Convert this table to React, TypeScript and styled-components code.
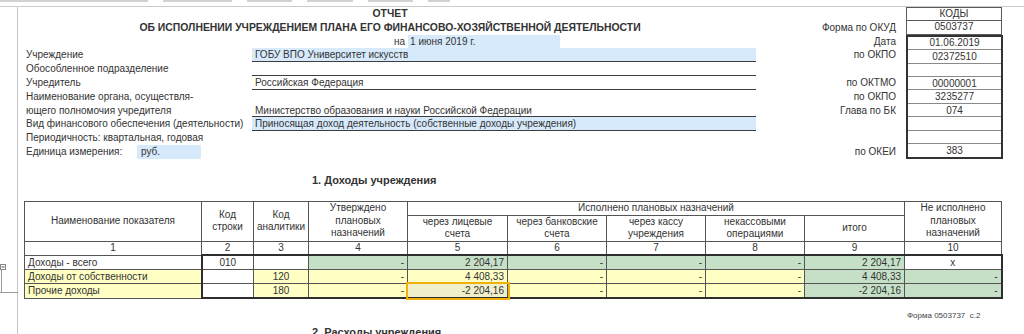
import React from "react";
import styled, { createGlobalStyle } from "styled-components";

const GlobalStyle = createGlobalStyle`
  html, body {
    margin: 0;
    padding: 0;
    background: #fff;
  }
  body {
    font-family: "Liberation Sans", Arial, sans-serif;
    color: #333;
  }
`;

const ROW = 13.8;
const BLUE = "#d7eafb";
const GREEN = "#c6e0c7";
const YELLOW = "#ffffc4";

const Screen = styled.div`
  width: 1024px;
  height: 334px;
  overflow: hidden;
  display: flex;
  flex-direction: column;
  background: #fff;
`;

const TopStrip = styled.div`
  height: 6px;
  flex: none;
  display: flex;
  align-items: flex-start;
  border-bottom: 1px solid #cbcbcb;
`;

const StripTab = styled.div<{ $w: number; $gap: number }>`
  width: ${(p) => p.$w}px;
  margin-left: ${(p) => p.$gap}px;
  height: 2px;
  background: #d2d2d2;
`;

const Body = styled.div`
  flex: 1;
  display: flex;
  min-height: 0;
`;

const Gutter = styled.div`
  width: 18px;
  flex: none;
  border-right: 1px solid #c6c6c6;
  padding-top: 249px;
  box-sizing: border-box;
`;

const Sheet = styled.div`
  flex: 1;
  display: flex;
  flex-direction: column;
  font-size: 10px;
`;

const HeaderGrid = styled.div`
  display: grid;
  grid-template-columns: 234px 504px 150px 96px;
  grid-auto-rows: ${ROW}px;
`;

const TitleLine = styled.div<{ $row: number }>`
  grid-column: 1 / span 2;
  grid-row: ${(p) => p.$row};
  padding-left: 6px;
  text-align: center;
  font-weight: bold;
  font-size: 10.4px;
  line-height: ${ROW}px;
  white-space: nowrap;
`;

const DateLine = styled.div`
  grid-column: 1 / span 2;
  grid-row: 3;
  display: flex;
  align-items: stretch;
  padding-left: 376px;
  line-height: ${ROW}px;
`;

const DateBox = styled.span`
  width: 150px;
  margin-left: 3px;
  padding-left: 2px;
  background: ${BLUE};
`;

const Label = styled.div<{ $row: number }>`
  grid-column: 1;
  grid-row: ${(p) => p.$row};
  padding-left: 8px;
  line-height: ${ROW}px;
  white-space: nowrap;
  display: flex;
`;

const UnitCaption = styled.span`
  width: 111px;
`;

const UnitBox = styled.span`
  width: 60px;
  padding-left: 4px;
  background: ${BLUE};
`;

const Field = styled.div<{ $row: number; $fill?: boolean; $line?: boolean }>`
  grid-column: 2;
  grid-row: ${(p) => p.$row};
  padding-left: 3px;
  line-height: ${ROW}px;
  box-sizing: border-box;
  white-space: nowrap;
  background: ${(p) => (p.$fill ? BLUE : "transparent")};
  border-bottom: ${(p) => (p.$line ? "1px solid #3d3d3d" : "none")};
`;

const CodeLabel = styled.div<{ $row: number }>`
  grid-column: 3;
  grid-row: ${(p) => p.$row};
  padding-right: 10px;
  text-align: right;
  line-height: ${ROW}px;
  white-space: nowrap;
`;

const CodesBox = styled.div`
  grid-column: 4;
  grid-row: 1 / span 11;
  display: flex;
  flex-direction: column;
`;

const PlainCode = styled.div<{ $first?: boolean }>`
  height: ${ROW}px;
  box-sizing: border-box;
  border: 1px solid #5a5a5a;
  border-top-width: ${(p) => (p.$first ? 1 : 0)}px;
  text-align: center;
  line-height: ${ROW - 1}px;
`;

const ThickGroup = styled.div`
  flex: 1;
  display: flex;
  flex-direction: column;
  border: 2px solid #333;
  margin-right: -1px;
`;

const GroupCell = styled.div`
  flex: 1;
  display: flex;
  align-items: center;
  justify-content: center;
  border-top: 1px solid #8a8a8a;
  &:first-child {
    border-top: none;
  }
`;

const SectionTitle = styled.div<{ $top: number }>`
  margin-top: ${(p) => p.$top}px;
  height: 14px;
  line-height: 14px;
  padding-left: 294px;
  font-weight: bold;
  font-size: 11px;
  white-space: nowrap;
`;

const Table = styled.table`
  margin-top: 14px;
  margin-left: 6px;
  width: 977px;
  table-layout: fixed;
  border-collapse: collapse;
  font-size: 10px;
  border: 1px solid #444;
`;

const Th = styled.th<{ $h?: number }>`
  border: 1px solid #555;
  font-weight: normal;
  text-align: center;
  vertical-align: middle;
  line-height: 12.5px;
  padding: 0 2px;
  height: ${(p) => (p.$h ? `${p.$h}px` : "auto")};
`;

type Tone = "white" | "green" | "yellow" | "selected";

const toneColor: Record<Tone, string> = {
  white: "#fff",
  green: GREEN,
  yellow: YELLOW,
  selected: "#efefcb",
};

const Td = styled.td<{
  $tone: Tone;
  $align?: "left" | "center" | "right";
  $top?: boolean;
  $bottom?: boolean;
  $left?: boolean;
  $right?: boolean;
}>`
  height: 13px;
  padding: 0 3px;
  line-height: 13px;
  white-space: nowrap;
  overflow: visible;
  background: ${(p) => toneColor[p.$tone]};
  text-align: ${(p) => p.$align ?? "right"};
  border: 1px solid #555;
  ${(p) => (p.$top ? "border-top: 2px solid #2e2e2e;" : "")}
  ${(p) => (p.$bottom ? "border-bottom: 2px solid #2e2e2e;" : "")}
  ${(p) => (p.$left ? "border-left: 2px solid #2e2e2e;" : "")}
  ${(p) => (p.$right ? "border-right: 2px solid #2e2e2e;" : "")}
  ${(p) =>
    p.$tone === "selected"
      ? "outline: 2px solid #f2b10a; outline-offset: 0px; position: relative;"
      : ""}
`;

const PageBreak = styled.div`
  margin-top: 12px;
  height: 1px;
  background: repeating-linear-gradient(to right, #555 0 7px, transparent 7px 10px);
`;

const FooterNote = styled.div`
  height: 10px;
  line-height: 10px;
  padding-left: 889px;
  font-size: 8px;
  white-space: pre;
  color: #444;
`;

const widths = [177, 52, 55, 99, 100, 99, 99, 99, 100, 97];

type Row = {
  name: string;
  nameTone: Tone;
  code: string;
  codeTone: Tone;
  an: string;
  anTone: Tone;
  cells: { v: string; tone: Tone; align?: "center" | "right" }[];
};

const rows: Row[] = [
  {
    name: "Доходы - всего",
    nameTone: "white",
    code: "010",
    codeTone: "white",
    an: "",
    anTone: "white",
    cells: [
      { v: "-", tone: "green" },
      { v: "2 204,17", tone: "green" },
      { v: "-", tone: "green" },
      { v: "-", tone: "green" },
      { v: "-", tone: "green" },
      { v: "2 204,17", tone: "green" },
      { v: "x", tone: "white", align: "center" },
    ],
  },
  {
    name: "Доходы от собственности",
    nameTone: "yellow",
    code: "",
    codeTone: "white",
    an: "120",
    anTone: "yellow",
    cells: [
      { v: "-", tone: "yellow" },
      { v: "4 408,33", tone: "yellow" },
      { v: "-", tone: "yellow" },
      { v: "-", tone: "yellow" },
      { v: "-", tone: "yellow" },
      { v: "4 408,33", tone: "green" },
      { v: "-", tone: "green" },
    ],
  },
  {
    name: "Прочие доходы",
    nameTone: "yellow",
    code: "",
    codeTone: "white",
    an: "180",
    anTone: "yellow",
    cells: [
      { v: "-", tone: "yellow" },
      { v: "-2 204,16", tone: "selected" },
      { v: "-", tone: "yellow" },
      { v: "-", tone: "yellow" },
      { v: "-", tone: "yellow" },
      { v: "-2 204,16", tone: "green" },
      { v: "-", tone: "green" },
    ],
  },
];

const tabs = [
  { w: 148, gap: 0 },
  { w: 69, gap: 15 },
  { w: 45, gap: 15 },
  { w: 46, gap: 15 },
  { w: 45, gap: 15 },
  { w: 22, gap: 15 },
];

const OutlineMark = () => (
  <svg width="18" height="38" viewBox="0 0 18 38">
    <rect x="0.5" y="8.5" width="5" height="5" fill="#fff" stroke="#888" />
    <line x1="1.5" y1="11" x2="4.5" y2="11" stroke="#555" />
    <line x1="1.5" y1="14" x2="1.5" y2="36.5" stroke="#9a9a9a" />
    <line x1="0" y1="36.5" x2="18" y2="36.5" stroke="#9a9a9a" />
  </svg>
);

const App: React.FC = () => {
  const last = rows.length - 1;
  return (
    <>
      <GlobalStyle />
      <Screen>
        <TopStrip>
          {tabs.map((t, i) => (
            <StripTab key={i} $w={t.w} $gap={t.gap} />
          ))}
        </TopStrip>
        <Body>
          <Gutter>
            <OutlineMark />
          </Gutter>
          <Sheet>
            <HeaderGrid>
              <TitleLine $row={1}>ОТЧЕТ</TitleLine>
              <TitleLine $row={2}>
                ОБ ИСПОЛНЕНИИ УЧРЕЖДЕНИЕМ ПЛАНА ЕГО ФИНАНСОВО-ХОЗЯЙСТВЕННОЙ ДЕЯТЕЛЬНОСТИ
              </TitleLine>
              <DateLine>
                <span>на</span>
                <DateBox>1 июня 2019 г.</DateBox>
              </DateLine>

              <Label $row={4}>Учреждение</Label>
              <Label $row={5}>Обособленное подразделение</Label>
              <Label $row={6}>Учредитель</Label>
              <Label $row={7}>Наименование органа, осуществля-</Label>
              <Label $row={8}>ющего полномочия учредителя</Label>
              <Label $row={9}>Вид финансового обеспечения (деятельности)</Label>
              <Label $row={10}>Периодичность: квартальная, годовая</Label>
              <Label $row={11}>
                <UnitCaption>Единица измерения:</UnitCaption>
                <UnitBox>руб.</UnitBox>
              </Label>

              <Field $row={4} $fill $line>
                ГОБУ ВПО Университет искусств
              </Field>
              <Field $row={5} $line />
              <Field $row={6} $line>
                Российская Федерация
              </Field>
              <Field $row={8} $line>
                Министерство образования и науки Российской Федерации
              </Field>
              <Field $row={9} $fill $line>
                Приносящая доход деятельность (собственные доходы учреждения)
              </Field>

              <CodeLabel $row={2}>Форма по ОКУД</CodeLabel>
              <CodeLabel $row={3}>Дата</CodeLabel>
              <CodeLabel $row={4}>по ОКПО</CodeLabel>
              <CodeLabel $row={6}>по ОКТМО</CodeLabel>
              <CodeLabel $row={7}>по ОКПО</CodeLabel>
              <CodeLabel $row={8}>Глава по БК</CodeLabel>
              <CodeLabel $row={11}>по ОКЕИ</CodeLabel>

              <CodesBox>
                <PlainCode $first>КОДЫ</PlainCode>
                <PlainCode>0503737</PlainCode>
                <ThickGroup>
                  <GroupCell>01.06.2019</GroupCell>
                  <GroupCell>02372510</GroupCell>
                  <GroupCell />
                  <GroupCell>00000001</GroupCell>
                  <GroupCell>3235277</GroupCell>
                  <GroupCell>074</GroupCell>
                  <GroupCell />
                  <GroupCell />
                  <GroupCell>383</GroupCell>
                </ThickGroup>
              </CodesBox>
            </HeaderGrid>

            <SectionTitle $top={ROW}>1. Доходы учреждения</SectionTitle>

            <Table>
              <colgroup>
                {widths.map((w, i) => (
                  <col key={i} style={{ width: w }} />
                ))}
              </colgroup>
              <thead>
                <tr>
                  <Th rowSpan={2}>Наименование показателя</Th>
                  <Th rowSpan={2}>
                    Код
                    <br />
                    строки
                  </Th>
                  <Th rowSpan={2}>
                    Код
                    <br />
                    аналитики
                  </Th>
                  <Th rowSpan={2}>
                    Утверждено
                    <br />
                    плановых
                    <br />
                    назначений
                  </Th>
                  <Th colSpan={5} $h={13}>
                    Исполнено плановых назначений
                  </Th>
                  <Th rowSpan={2}>
                    Не исполнено
                    <br />
                    плановых
                    <br />
                    назначений
                  </Th>
                </tr>
                <tr>
                  <Th $h={25}>
                    через лицевые
                    <br />
                    счета
                  </Th>
                  <Th>
                    через банковские
                    <br />
                    счета
                  </Th>
                  <Th>
                    через кассу
                    <br />
                    учреждения
                  </Th>
                  <Th>
                    некассовыми
                    <br />
                    операциями
                  </Th>
                  <Th>итого</Th>
                </tr>
                <tr>
                  {widths.map((_, i) => (
                    <Th key={i} $h={12}>
                      {i + 1}
                    </Th>
                  ))}
                </tr>
              </thead>
              <tbody>
                {rows.map((r, ri) => {
                  const top = ri === 0;
                  const bottom = ri === last;
                  return (
                    <tr key={r.name}>
                      <Td $tone={r.nameTone} $align="left">
                        {r.name}
                      </Td>
                      <Td $tone={r.codeTone} $align="center" $top={top} $bottom={bottom} $left>
                        {r.code}
                      </Td>
                      <Td $tone={r.anTone} $align="center" $top={top} $bottom={bottom}>
                        {r.an}
                      </Td>
                      {r.cells.map((c, ci) => (
                        <Td
                          key={ci}
                          $tone={c.tone}
                          $align={c.align ?? "right"}
                          $top={top}
                          $bottom={bottom}
                          $right={ci === r.cells.length - 1}
                        >
                          {c.v}
                        </Td>
                      ))}
                    </tr>
                  );
                })}
              </tbody>
            </Table>

            <PageBreak />
            <FooterNote>{"Форма 0503737  с.2"}</FooterNote>
            <SectionTitle $top={4}>2. Расходы учреждения</SectionTitle>
          </Sheet>
        </Body>
      </Screen>
    </>
  );
};

export default App;
